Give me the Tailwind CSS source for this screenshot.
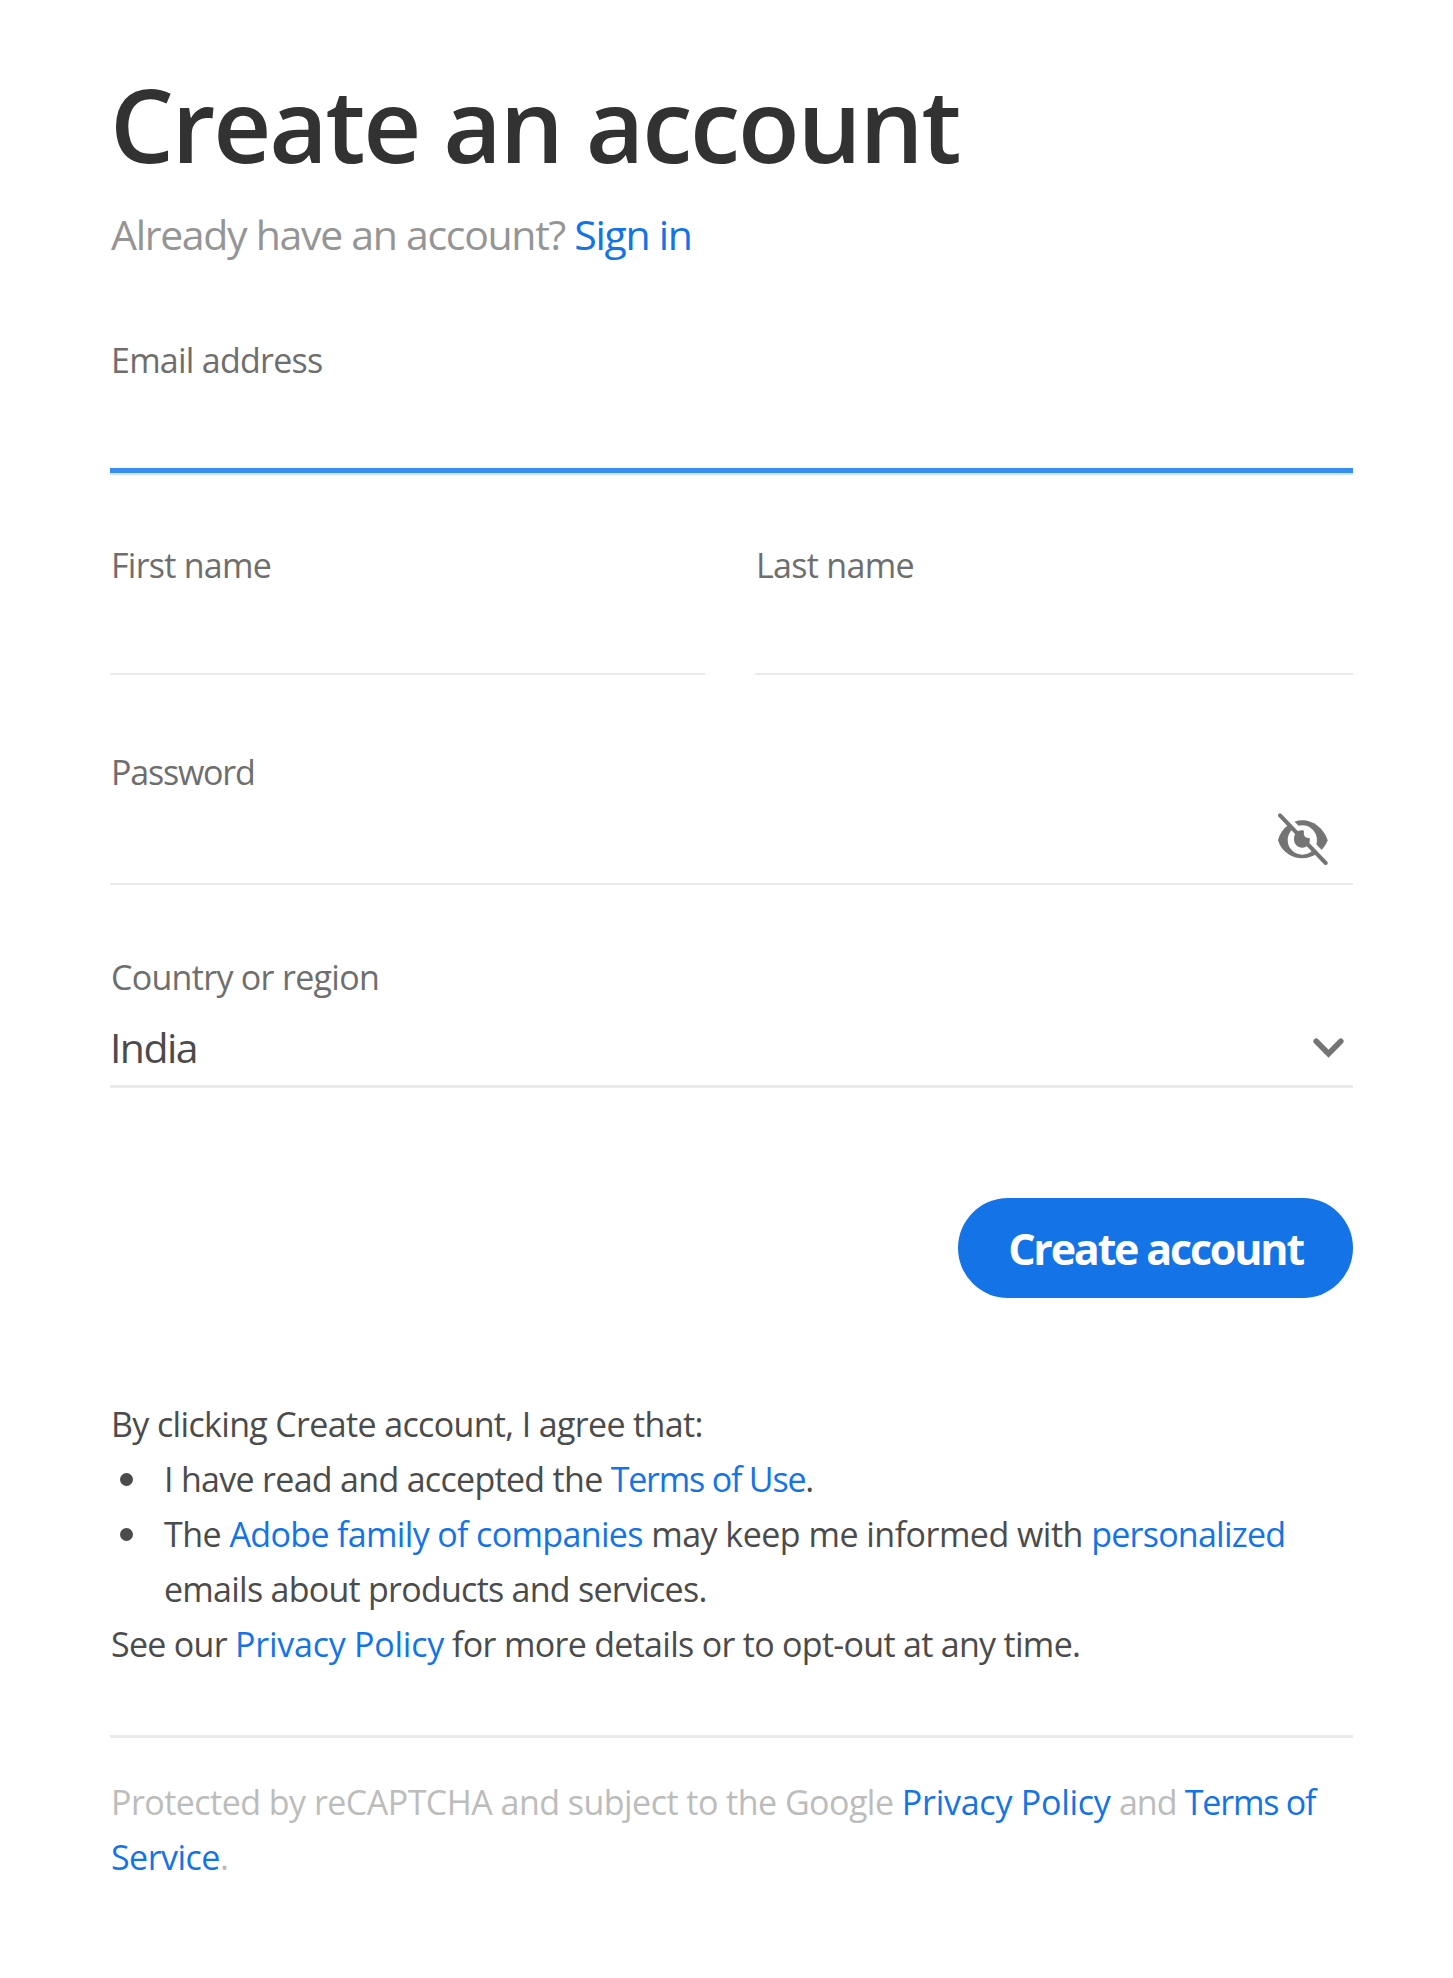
<!DOCTYPE html>
<html lang="en">
<head>
    <meta charset="UTF-8">
    <meta name="viewport" content="width=device-width, initial-scale=1.0">
    <title>Create an account</title>
    <script src="https://cdn.jsdelivr.net/npm/@tailwindcss/browser@4"></script>
</head>
<body class="bg-white font-['Open_Sans',sans-serif] text-[#4b4b4b]">
    <main class="w-[1243px] ml-[110px] pt-16 pb-12">
        <h1 class="text-[101px] leading-[120px] font-semibold tracking-[-2.2px] text-[#323232] whitespace-nowrap">Create an account</h1>
        <p class="mt-[25px] pl-px text-[41px] leading-[50px] tracking-[-1.3px] text-[#959595] whitespace-nowrap">
            Already have an account? <a href="#" class="text-[#1473e6]">Sign in</a>
        </p>

        <!-- Sign up form -->
        <form>
            <div class="mt-[79px]">
                <label for="email" class="block pl-px text-[34px] leading-[44px] tracking-[-0.75px] text-[#6e6e6e]">Email address</label>
                <input type="email" id="email" class="block w-full h-[91px] border-b-5 border-[#378ef0] outline-none shadow-[0_2px_0_#cfe4fb]" />
            </div>

            <div class="mt-[70px] grid grid-cols-[595px_598px] gap-[50px]">
                <div>
                    <label for="first-name" class="block pl-px text-[34px] leading-[44px] tracking-[-0.75px] text-[#6e6e6e]">First name</label>
                    <input type="text" id="first-name" class="block w-full h-[88px] border-b-2 border-[#eaeaea] outline-none" />
                </div>
                <div>
                    <label for="last-name" class="block pl-px text-[34px] leading-[44px] tracking-[-0.7px] text-[#6e6e6e]">Last name</label>
                    <input type="text" id="last-name" class="block w-full h-[88px] border-b-2 border-[#eaeaea] outline-none" />
                </div>
            </div>

            <div class="mt-[75px]">
                <label for="password" class="block pl-px text-[34px] leading-[44px] tracking-[-1.2px] text-[#6e6e6e]">Password</label>
                <div class="flex h-[91px] border-b-2 border-[#eaeaea]">
                    <input type="password" id="password" class="flex-1 outline-none" />
                    <button type="button" aria-label="Show password" class="mr-[25px] mt-[19px] self-start">
                        <svg class="block w-[50px] h-[52px]" viewBox="115 98 150 156" fill="none">
                            <path d="M115 180C124 143 156 120 188 120S252 143 264 180C252 214 218 234 188 234S126 216 115 180Z" fill="#747474"/>
                            <circle cx="188" cy="179" r="44" fill="#fff"/>
                            <path d="M130 98L268 242" stroke="#fff" stroke-width="14"/>
                            <path d="M186 150C191 150 193 151 193 155C190 165 197 174 210 173C213 188 204 202 188 202C173 202 163 191 163 176C163 162 172 150 186 150Z" fill="#747474"/>
                            <path d="M121 105L258 248" stroke="#747474" stroke-width="12" stroke-linecap="round"/>
                        </svg>
                    </button>
                </div>
            </div>

            <div class="mt-[70px]">
                <label class="block pl-px text-[34px] leading-[44px] tracking-[-0.7px] text-[#6e6e6e]">Country or region</label>
                <div class="flex items-center justify-between h-[89px] border-b-3 border-[#eaeaea] text-[41px] tracking-[-1.6px]">
                    <span class="pt-[12px]">India</span>
                    <svg class="w-[31px] h-[20px] mr-[9px] mt-[12px]" viewBox="0 0 31 20" fill="none">
                        <path d="M3.2 3.2L15.5 15.8L27.8 3.2" stroke="#747474" stroke-width="5.6" stroke-linecap="round"/>
                    </svg>
                </div>
            </div>

            <div class="mt-[110px] flex justify-end">
                <button type="submit" class="w-[395px] h-[100px] pt-[3px] rounded-full bg-[#1473e6] text-white text-[43px] font-bold tracking-[-2.2px] whitespace-nowrap">Create account</button>
            </div>
        </form>

        <!-- Legal text -->
        <div class="mt-[99px] text-[34px] leading-[55px] tracking-[-0.7px]">
            <p class="pl-px tracking-[-0.65px]">By clicking Create account, I agree that:</p>
            <ul>
                <li class="flex">
                    <span class="w-[13px] h-[13px] ml-[10px] mr-[31px] mt-[21px] rounded-full bg-[#4b4b4b]"></span>
                    <span class="whitespace-nowrap">I have read and accepted the <a href="#" class="tracking-[-1.2px] text-[#1473e6]">Terms of Use</a>.</span>
                </li>
                <li class="flex">
                    <span class="w-[13px] h-[13px] ml-[10px] mr-[31px] mt-[21px] rounded-full bg-[#4b4b4b]"></span>
                    <span class="whitespace-nowrap tracking-[-0.52px]">The <a href="#" class="tracking-[-0.65px] text-[#1473e6]">Adobe family of companies</a> may keep me informed with <a href="#" class="tracking-[-0.75px] text-[#1473e6]">personalized</a><br><span class="tracking-[-0.74px]">emails about products and services.</span></span>
                </li>
            </ul>
            <p class="pl-px">See our <a href="#" class="tracking-[-0.25px] text-[#1473e6]">Privacy Policy</a> for more details or to opt-out at any time.</p>
        </div>

        <hr class="mt-[63px] border-t-3 border-[#eaeaea]" />

        <p class="mt-[37px] pl-px text-[34px] leading-[55px] tracking-[-0.53px] text-[#bcbcbc] whitespace-nowrap">
            Protected by reCAPTCHA and subject to the Google <a href="#" class="tracking-[-0.25px] text-[#1473e6]">Privacy Policy</a> <span class="tracking-[-1px]">and</span> <a href="#" class="text-[#1473e6]"><span class="tracking-[-1.2px]">Terms of</span><br>Service</a>.
        </p>
    </main>
</body>
</html>
